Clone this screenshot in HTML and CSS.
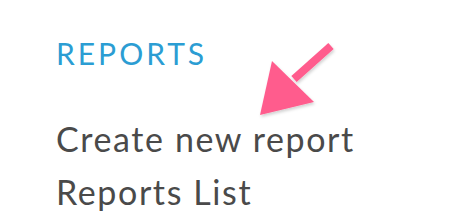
FILE: index.html
```html
<!DOCTYPE html>
<html lang="en">
<head>
    <meta charset="UTF-8">
    <title>Reports</title>
    <link rel="stylesheet" href="styles.css">
</head>
<body>
<div class="menu">
    <h2 class="menu-title">REPORTS</h2>
    <ul class="menu-list">
        <li><a href="#">Create new report</a></li>
        <li><a href="#">Reports List</a></li>
    </ul>
    <svg class="arrow" width="90" height="90" viewBox="0 0 90 90">
        <defs>
            <filter id="shadow" x="-20%" y="-20%" width="150%" height="150%">
                <feDropShadow dx="1" dy="2" stdDeviation="1.5" flood-color="#000" flood-opacity="0.18"/>
            </filter>
        </defs>
        <g filter="url(#shadow)">
            <line x1="81" y1="8" x2="44" y2="41" stroke="#ff5c8d" stroke-width="8" stroke-linecap="butt"/>
            <polygon points="22,23 10,77 64,64" fill="#ff5c8d"/>
        </g>
    </svg>
</div>
</body>
</html>
```

FILE: styles.css
```css
* {
    box-sizing: border-box;
}

body {
    margin: 0;
    background: #ffffff;
    font-family: Lato, "Open Sans", sans-serif;
}

.menu {
    position: relative;
    padding: 35px 0 0 56px;
}

.menu-title {
    margin: 0;
    font-size: 30px;
    font-weight: 400;
    letter-spacing: 3px;
    color: #2b9dd3;
    line-height: 36px;
}

.menu-list {
    list-style: none;
    margin: 41px 0 0 0;
    padding: 0;
}

.menu-list li {
    font-size: 34px;
    letter-spacing: 1.6px;
    line-height: 53px;
}

.menu-list a {
    color: #4a4a4a;
    text-decoration: none;
}

.arrow {
    position: absolute;
    left: 250px;
    top: 38px;
}
```
